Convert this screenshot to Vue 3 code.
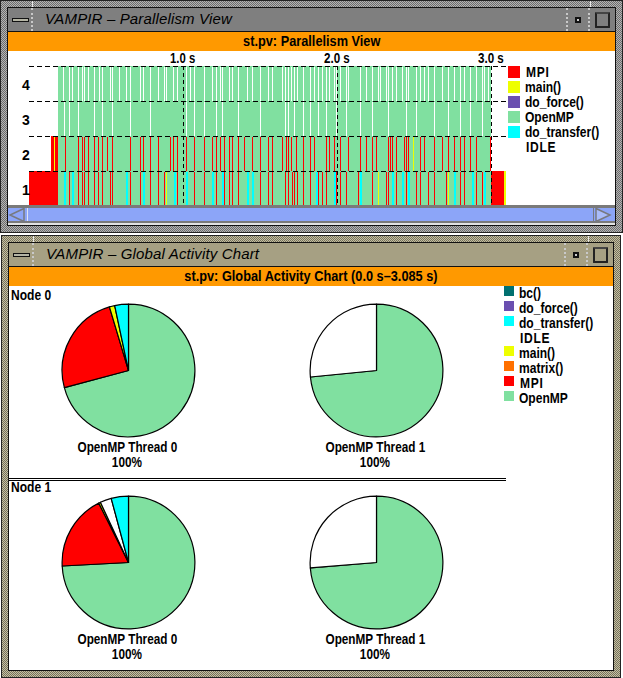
<template>
  <div class="desk">
    <section class="win win-grey">
      <div class="inner">
        <header class="titlebar">
          <div class="tb-btn tb-menu"><span class="menu-bar"></span></div>
          <div class="tb-title">VAMPIR – Parallelism View</div>
          <div class="tb-btn tb-min"><span class="min-dot"></span></div>
          <div class="tb-btn tb-max"><span class="max-box"></span></div>
        </header>
        <div class="heading"><span class="head-text">st.pv: Parallelism View</span></div>
        <div class="plot">
          <svg class="timeline" width="500" height="154" viewBox="8 51 500 154">
            <rect x="29" y="171" width="29" height="34" fill="#ff0000" />
            <rect x="51" y="136" width="7" height="35" fill="#ff0000" />
            <rect x="54" y="136" width="1" height="35" fill="#eeff00" />
            <rect x="58" y="66" width="433" height="139" fill="#80e0a0" />
            <rect x="491" y="171" width="13" height="34" fill="#ff0000" />
            <rect x="504" y="171" width="2" height="34" fill="#eeff00" />
            <g shape-rendering="crispEdges" fill="none">
              <path v-for="b in bars" :key="b.key" :d="b.d" :stroke="b.color" :stroke-width="b.w" />
              <path d="M29 66.5H506M29 101.5H506M29 136.5H506M29 171.5H491" stroke="#000" stroke-dasharray="5 3" />
              <path d="M183.5 66V205M337.5 66V205M491.5 66V205" stroke="#000" stroke-dasharray="4 3" />
            </g>
            <text class="axis" transform="translate(170 63) scale(.81 1)">1.0 s</text>
            <text class="axis" transform="translate(324 63) scale(.83 1)">2.0 s</text>
            <text class="axis" transform="translate(478 63) scale(.83 1)">3.0 s</text>
            <text class="axis" x="22" y="90">4</text>
            <text class="axis" x="22" y="125">3</text>
            <text class="axis" x="22" y="160">2</text>
            <text class="axis" x="22" y="195">1</text>
          </svg>
          <ul class="legend legend-top">
            <li v-for="l in topLegend" :key="l.name">
              <i class="swatch" :style="{ background: l.color }"></i>
              <span class="lbl" :class="{ caps: l.name === l.name.toUpperCase() }">{{ l.name }}</span>
            </li>
          </ul>
        </div>
        <div class="scroll">
          <svg class="arrow" width="19" height="16" viewBox="0 0 19 16">
            <path d="M16 1.5V14.5L2 8Z" fill="#8ca5f8" stroke="#77797f" stroke-width="1.5" />
          </svg>
          <div class="thumb"></div>
          <svg class="arrow arrow-r" width="18" height="16" viewBox="0 0 18 16">
            <path d="M2 1.5V14.5L16 8Z" fill="#a9bcfa" stroke="#77797f" stroke-width="1.5" />
          </svg>
        </div>
      </div>
    </section>

    <section class="win win-khaki">
      <div class="inner">
        <header class="titlebar">
          <div class="tb-btn tb-menu"><span class="menu-bar"></span></div>
          <div class="tb-title">VAMPIR – Global Activity Chart</div>
          <div class="tb-btn tb-min"><span class="min-dot"></span></div>
          <div class="tb-btn tb-max"><span class="max-box"></span></div>
        </header>
        <div class="heading"><span class="head-text">st.pv: Global Activity Chart (0.0 s–3.085 s)</span></div>
        <div class="activity">
          <div class="nodes">
            <div v-for="(node, i) in nodes" :key="node.name" class="node">
              <div v-if="i > 0" class="sep"></div>
              <div class="node-label"><span class="lbl">{{ node.name }}</span></div>
              <div class="figs">
                <figure v-for="t in node.threads" :key="t.name" class="fig">
                  <svg class="pie" width="135" height="135" viewBox="0 0 135 135">
                    <path v-for="s in slices(t.parts)" :key="s.color + s.d" :d="s.d" :fill="s.color" stroke="#000" stroke-width="1.2" stroke-linejoin="round" />
                  </svg>
                  <figcaption><span class="cond">{{ t.name }}</span><br /><span class="cond">100%</span></figcaption>
                </figure>
              </div>
            </div>
          </div>
          <ul class="legend legend-side">
            <li v-for="l in sideLegend" :key="l.name">
              <i class="swatch" :style="{ background: l.color }"></i>
              <span class="lbl" :class="{ caps: l.name === l.name.toUpperCase() }">{{ l.name }}</span>
            </li>
          </ul>
        </div>
      </div>
    </section>
  </div>
</template>

<script setup>
const GREEN = '#80e0a0'
const RED = '#ff0000'
const YELLOW = '#eeff00'
const CYAN = '#00ffff'
const PURPLE = '#6a4fb0'

const topLegend = [
  { name: 'MPI', color: RED },
  { name: 'main()', color: YELLOW },
  { name: 'do_force()', color: PURPLE },
  { name: 'OpenMP', color: GREEN },
  { name: 'do_transfer()', color: CYAN },
  { name: 'IDLE', color: '#fff' },
]
const sideLegend = [
  { name: 'bc()', color: '#007070' },
  { name: 'do_force()', color: PURPLE },
  { name: 'do_transfer()', color: CYAN },
  { name: 'IDLE', color: '#fff' },
  { name: 'main()', color: YELLOW },
  { name: 'matrix()', color: '#ff7000' },
  { name: 'MPI', color: RED },
  { name: 'OpenMP', color: GREEN },
]

// tick positions were read off 3x crops, so they are in thirds of a pixel from x=50 / x=280
const left = (list) => list.map((v) => 50 + Math.round(v / 3))
const right = (list) => list.map((v) => 280 + Math.round(v / 3))

const row4 = [
  ...left([40, 57, 66, 85, 95, 103, 115, 131, 147, 157, 181, 187, 207, 227, 240, 270, 278, 301, 323, 341, 349, 369, 381, 409, 420, 433, 461, 485, 497, 509, 517, 536, 547, 564, 590, 607, 631, 655, 667]),
  ...right([5, 15, 23, 33, 43, 51, 70, 91, 103, 115, 127, 137, 146, 161, 167, 181, 199, 205, 241, 257, 277, 295, 300, 319, 325, 337, 349, 365, 379, 385, 409, 421, 431, 445, 463, 487, 505, 523, 541, 553, 571, 589, 607, 613, 625]),
]
const row3 = [
  ...left([42, 57, 85, 131, 157, 187, 240, 301, 409, 433, 461, 497, 517, 564, 631]),
  ...right([15, 23, 43, 70, 91, 115, 137, 167, 199, 241, 277, 325, 379, 409, 463, 505, 541, 571, 607]),
]
const row2 = [
  ...left([44, 85, 95, 103, 115, 131, 145, 157, 171, 187, 240, 270, 279, 301, 323, 359, 369, 381, 409, 433, 461, 485, 497, 509, 523, 536, 547, 564, 581, 607, 631, 655, 667]),
  ...right([5, 17, 23, 33, 49, 70, 91, 103, 137, 146, 161, 181, 205, 241, 257, 277, 287, 325, 331, 337, 349, 373, 379, 385, 421, 431, 461, 487, 505, 523, 541, 553, 571, 589, 631]),
]
const row1 = [
  ...left([58, 85, 95, 103, 115, 131, 145, 157, 181, 187, 240, 270, 301, 323, 341, 381, 433, 461, 497, 523, 536, 547, 564, 631, 655, 667]),
  ...right([15, 23, 35, 43, 51, 70, 91, 115, 127, 137, 167, 181, 199, 233, 277, 319, 325, 349, 379, 409, 421, 445, 463, 499, 541, 553, 589, 607]),
]
const row1Cyan = [
  ...left([42, 66, 227, 278, 372, 409, 485, 517, 590, 607]),
  ...right([109, 161, 241, 337, 365, 385, 523, 577, 613]),
]

function stripes(list, y1, y2) {
  return list.map((x) => `M${x + 0.5} ${y1}V${y2}`).join('')
}

const bars = [
  { key: 'r4', color: '#fff', w: 1, d: stripes(row4, 67, 101) },
  { key: 'r3', color: '#fff', w: 1, d: stripes(row3, 102, 136) },
  { key: 'r2', color: RED, w: 1, d: stripes(row2, 137, 171) },
  { key: 'r1c', color: CYAN, w: 2, d: stripes(row1Cyan, 172, 205) },
  { key: 'r1', color: RED, w: 1, d: stripes(row1, 172, 205) },
  { key: 'r2y', color: YELLOW, w: 1, d: stripes(right([400]), 137, 171) },
  { key: 'r1y', color: YELLOW, w: 1, d: stripes([...left([349]), ...right([295, 505])], 172, 205) },
]

// each part runs clockwise from 12 o'clock up to the angle "to"
const nodes = [
  {
    name: 'Node 0',
    threads: [
      { name: 'OpenMP Thread 0', parts: [[255, GREEN], [343.3, RED], [348, YELLOW], [360, CYAN]] },
      { name: 'OpenMP Thread 1', parts: [[264.4, GREEN], [360, '#fff']] },
    ],
  },
  {
    name: 'Node 1',
    threads: [
      { name: 'OpenMP Thread 0', parts: [[267, GREEN], [333.4, RED], [335, YELLOW], [344.9, '#fff'], [360, CYAN]] },
      { name: 'OpenMP Thread 1', parts: [[265.3, GREEN], [360, '#fff']] },
    ],
  },
]

function slices(parts) {
  const c = 67.5
  const r = 66.4
  let from = 0
  return parts.map(([to, color]) => {
    const pt = (deg) => {
      const a = (deg * Math.PI) / 180
      return `${(c + r * Math.sin(a)).toFixed(2)} ${(c - r * Math.cos(a)).toFixed(2)}`
    }
    const large = to - from > 180 ? 1 : 0
    const d = `M${c} ${c}L${pt(from)}A${r} ${r} 0 ${large} 1 ${pt(to)}Z`
    from = to
    return { d, color }
  })
}
</script>

<style>
html, body { margin: 0; background: #fff; }
</style>

<style scoped>
.desk {
  width: 623px;
  height: 678px;
  overflow: hidden;
  display: flex;
  flex-direction: column;
  gap: 2px;
  background: #fff;
  font-family: "Liberation Sans", Arial, sans-serif;
  color: #000;
}
.win {
  box-sizing: border-box;
  border: 1px solid #222;
  padding: 6px;
  background-size: 2px 2px;
}
.win-grey {
  --bar: #7f7f7f;
  background-image: repeating-conic-gradient(#b4b4b4 0 25%, #6c6c6c 0 50%);
}
.win-khaki {
  --bar: #a6a083;
  flex: 1;
  margin-left: 1px;
  width: 620px;
  display: flex;
  background-image: repeating-conic-gradient(#c4bfa4 0 25%, #77725a 0 50%);
}
.inner {
  flex: 1;
  min-width: 0;
  display: flex;
  flex-direction: column;
  border: 1px solid #111;
  background: #fff;
}
.titlebar {
  display: flex;
  height: 23px;
  border-bottom: 1px solid #111;
  background: var(--bar);
}
.tb-btn {
  position: relative;
  display: flex;
  align-items: center;
  justify-content: center;
  box-sizing: border-box;
}
.tb-menu { width: 25px; padding-left: 2px; border-right: 2px dotted #c9c9c9; }
.tb-min { width: 24px; border-left: 2px dotted #c9c9c9; border-right: 2px dotted #c9c9c9; }
.tb-max { width: 25px; }
.tb-btn::before {
  content: "";
  position: absolute;
  top: -7px;
  width: 1px;
  height: 6px;
  background: #e8e8e8;
}
.tb-menu::before { right: -2px; }
.tb-max::before { left: 0; }
.tb-min::before { display: none; }
.menu-bar {
  width: 15px;
  height: 2px;
  border: 1.5px solid #111;
  background: #b5b5a5;
}
.min-dot {
  width: 2px;
  height: 2px;
  border: 2px solid #111;
  background: #ccc;
}
.max-box {
  box-sizing: border-box;
  width: 15px;
  height: 16px;
  border: 2px solid #222;
  border-top-color: #444;
  border-radius: 1px;
}
.tb-title {
  flex: 1;
  padding-left: 12px;
  font-size: 15px;
  font-style: italic;
  line-height: 21px;
  letter-spacing: 0.15px;
  color: #000;
}
.heading {
  height: 19px;
  background: #ff9900;
  text-align: center;
  font-size: 15px;
  font-weight: 700;
  line-height: 18px;
}
.head-text {
  display: inline-block;
  transform: scaleX(0.85);
  white-space: nowrap;
}
.cond {
  display: inline-block;
  transform: scaleX(0.84);
  white-space: nowrap;
}
.lbl {
  display: inline-block;
  transform: scaleX(0.86);
  transform-origin: left;
  font-size: 14px;
  font-weight: 700;
  white-space: nowrap;
}
.caps {
  margin-left: 1px;
  letter-spacing: 0.8px;
}
.plot {
  display: flex;
  height: 154px;
}
.timeline { display: block; flex: none; overflow: visible; }
.axis {
  font-size: 14px;
  font-weight: 700;
}
.legend {
  list-style: none;
  margin: 0;
  padding: 0;
}
.legend li {
  display: flex;
  height: 15px;
  line-height: 12px;
}
.swatch { flex: none; }
.legend-top { padding-top: 15px; }
.legend-top .swatch { width: 12px; height: 12px; margin-right: 5px; }
.legend-side { margin-left: -2px; }
.legend-side .swatch { width: 10px; height: 10px; margin-right: 5px; }
.legend-side .lbl { line-height: 14px; }
.scroll {
  display: flex;
  align-items: center;
  box-sizing: border-box;
  height: 20px;
  border-top: 3px solid #7a7a7a;
  border-bottom: 2px solid #e2e2e2;
  background: #8ca5f8;
  box-shadow: inset 0 -2px 0 #7a7a7a;
  padding-bottom: 2px;
}
.arrow { flex: none; display: block; }
.arrow-r { border-left: 1px solid #77797f; margin-right: 3px; }
.thumb {
  flex: 1;
  align-self: stretch;
  border-left: 1px solid #dfe4f5;
}
.activity {
  flex: 1;
  display: flex;
}
.nodes { width: 497px; flex: none; }
.node-label {
  height: 17px;
  padding-left: 2px;
  line-height: 18px;
}
.sep {
  height: 1px;
  border-top: 1px solid #000;
  border-bottom: 1px solid #000;
}
.node { height: 192px; }
.node + .node .node-label { margin-top: -3px; }
.figs {
  display: flex;
  margin-left: -4.5px;
}
.fig {
  width: 248px;
  margin: 0;
  text-align: center;
}
.pie { display: block; margin: 0 auto 2px; }
figcaption {
  padding-right: 3px;
  font-size: 14px;
  font-weight: 700;
  line-height: 15px;
}
</style>
